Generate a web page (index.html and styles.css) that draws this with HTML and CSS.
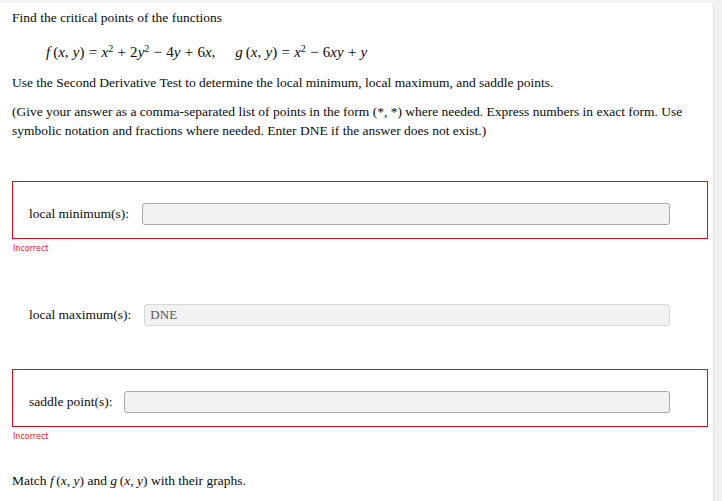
FILE: index.html
```html
<!DOCTYPE html>
<html>
<head>
<meta charset="utf-8">
<link rel="stylesheet" href="styles.css">
</head>
<body>
<div class="page">
  <div class="content">
    <p class="intro">Find the critical points of the functions</p>
    <p class="eq"><span class="v">f</span>&#8201;(<span class="v">x</span>, <span class="v">y</span>) = <span class="v">x</span><sup>2</sup> + 2<span class="v">y</span><sup>2</sup> &minus; 4<span class="v">y</span> + 6<span class="v">x</span>,<span class="sp"></span><span class="v">g</span>&#8201;(<span class="v">x</span>, <span class="v">y</span>) = <span class="v">x</span><sup>2</sup> &minus; 6<span class="v">x</span><span class="v">y</span> + <span class="v">y</span></p>
    <p class="txt">Use the Second Derivative Test to determine the local minimum, local maximum, and saddle points.</p>
    <p class="txt note">(Give your answer as a comma-separated list of points in the form (*, *) where needed. Express numbers in exact form. Use symbolic notation and fractions where needed. Enter DNE if the answer does not exist.)</p>

    <div class="answer wrong first">
      <label class="lbl">local minimum(s):</label>
      <div class="field"></div>
    </div>
    <div class="msg">Incorrect</div>

    <div class="answer ok">
      <label class="lbl">local maximum(s):</label>
      <div class="field light">DNE</div>
    </div>

    <div class="answer wrong third">
      <label class="lbl">saddle point(s):</label>
      <div class="field"></div>
    </div>
    <div class="msg">Incorrect</div>

    <p class="txt match">Match <span class="v">f</span>&#8201;(<span class="v">x</span>, <span class="v">y</span>) and <span class="v">g</span>&#8201;(<span class="v">x</span>, <span class="v">y</span>) with their graphs.</p>
  </div>
</div>
</body>
</html>
```
FILE: styles.css
```css
html, body {
  margin: 0;
  padding: 0;
  background: #f2f2f2;
}
body {
  width: 722px;
  height: 501px;
  overflow: hidden;
  font-family: "Liberation Serif", "Times New Roman", serif;
  color: #0c0c0c;
}
.page {
  margin-top: 3px;
  width: 713px;
  height: 498px;
  background: #fff;
  border-right: 1px solid #e2e2e2;
}
.content {
  padding: 7px 0 0 12px;
  width: 696px;
}
p {
  margin: 0;
}
.intro {
  font-size: 13.5px;
  line-height: 16px;
}
.eq {
  margin: 17px 0 0 34px;
  font-size: 15px;
  line-height: 18px;
  word-spacing: 0.5px;
}
.v {
  font-style: italic;
}
sup {
  font-size: 10px;
  line-height: 0;
  vertical-align: 5px;
}
.sp {
  display: inline-block;
  width: 20px;
}
.txt {
  font-size: 13.5px;
  line-height: 19px;
}
.eq + .txt {
  margin-top: 12px;
}
.note {
  margin-top: 10px;
}
.answer {
  display: flex;
  align-items: center;
  gap: 13px;
  height: 58px;
  box-sizing: border-box;
  padding: 7px 37px 0 16px;
  border: 1px solid transparent;
  font-size: 13.5px;
}
.answer.wrong {
  border-color: #d0101c;
}
.first {
  margin-top: 41px;
}
.ok {
  margin-top: 41px;
  height: 40px;
  padding-top: 0;
}
.third {
  margin-top: 34px;
}
.third .lbl {
  margin-right: -2px;
}
.lbl {
  white-space: nowrap;
}
.field {
  flex: 1;
  height: 20px;
  background: #f2f2f2;
  border: 1px solid #a9a9a9;
  border-radius: 3px;
  font-size: 13px;
  line-height: 20px;
  padding-left: 5px;
  color: #555;
}
.field.light {
  border-color: #d8d8d8;
}
.msg {
  margin-top: 5px;
  padding-left: 1px;
  font-family: "DejaVu Sans", Verdana, sans-serif;
  font-size: 8px;
  line-height: 10px;
  color: #e0241f;
}
.match {
  margin-top: 29px;
}
```
